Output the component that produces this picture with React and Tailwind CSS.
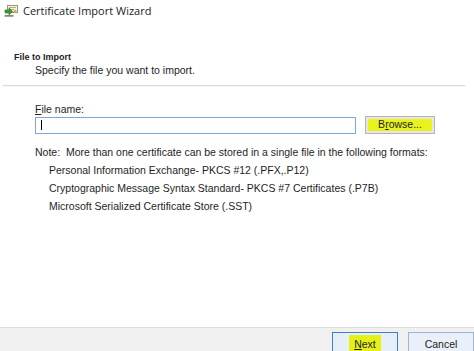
import React from 'react';

function WizardIcon() {
  return (
    <svg width="14" height="12" viewBox="0 0 14 12">
      <rect x="3.5" y="0.5" width="10" height="7" fill="#f4f1e6" stroke="#9a9480" />
      <line x1="5" y1="2.5" x2="12" y2="2.5" stroke="#b6ae94" />
      <line x1="5" y1="4.5" x2="10" y2="4.5" stroke="#b6ae94" />
      <circle cx="11" cy="6" r="1.6" fill="#e0b43c" />
      <path d="M1 5 L5 5 L5 3 L8.5 6.5 L5 10 L5 8 L1 8 Z" fill="#3e9a2c" stroke="#2a6e1c" strokeWidth="0.6" />
      <rect x="0.5" y="10.2" width="9" height="1.4" fill="#6c6a60" />
    </svg>
  );
}

export default function App() {
  const formats = [
    'Personal Information Exchange- PKCS #12 (.PFX,.P12)',
    'Cryptographic Message Syntax Standard- PKCS #7 Certificates (.P7B)',
    'Microsoft Serialized Certificate Store (.SST)',
  ];

  return (
    <div className="w-[474px] h-[351px] bg-white flex flex-col overflow-hidden text-[10.5px] text-[#1e1e1e] font-['Liberation_Sans',Arial,sans-serif]">
      {/* title bar */}
      <div className="h-[22px] flex items-center pl-[4px] gap-[5px] shrink-0">
        <WizardIcon />
        <span className="text-[11px] text-[#222] font-['Open_Sans',sans-serif]">Certificate Import Wizard</span>
      </div>

      {/* header */}
      <div className="pt-[29px] shrink-0">
        <div className="pl-[14px] h-[12px] leading-[12px] text-[9px] font-bold">File to Import</div>
        <div className="pl-[35px] mt-[1px] h-[13px] leading-[13px]">Specify the file you want to import.</div>
      </div>
      <div className="mt-[8px] mx-[3px] w-[462px] h-[2px] bg-[#dcdcdc] border-b border-[#f4f4f4] shrink-0" />

      {/* body */}
      <div className="pl-[35px] pt-[16px] flex flex-col shrink-0">
        <div className="h-[12px] leading-[12px]"><span className="underline">F</span>ile name:</div>
        <div className="mt-[1px] flex items-center gap-[9px]">
          <div className="w-[321px] h-[17px] border border-[#7ea6d6] bg-white flex items-center pl-[5px]">
            <div className="w-px h-[10px] bg-black" />
          </div>
          <div className="w-[70px] h-[18px] border border-[#b4b4b4] bg-[#e6e6e6] p-[2px]">
            <div className="w-full h-full bg-[#e9f21a] flex items-center justify-center">
              <span>B<span className="underline">r</span>owse...</span>
            </div>
          </div>
        </div>
        <div className="mt-[12px] h-[13px] leading-[13px]">Note:&nbsp; More than one certificate can be stored in a single file in the following formats:</div>
        <div className="pl-[14px] flex flex-col gap-[5px] mt-[5px]">
          {formats.map((f) => (
            <div key={f} className="h-[13px] leading-[13px]">{f}</div>
          ))}
        </div>
      </div>

      <div className="flex-1" />

      {/* footer */}
      <div className="h-[24px] shrink-0 bg-[#f0f0f0] border-t border-[#dfdfdf] flex justify-end items-start pt-[4px] gap-[10px]">
        <div className="w-[66px] h-[22px] border border-[#3c7fd1] bg-[#e6eef8] p-[2px] flex justify-center">
          <div className="w-[32px] h-full bg-[#e4f016] flex justify-center pt-[2px]">
            <span><span className="underline">N</span>ext</span>
          </div>
        </div>
        <div className="w-[66px] h-[22px] border border-[#9fb5d0] bg-[#e9f0f9] flex justify-center pt-[4px]">
          Cancel
        </div>
      </div>
    </div>
  );
}
